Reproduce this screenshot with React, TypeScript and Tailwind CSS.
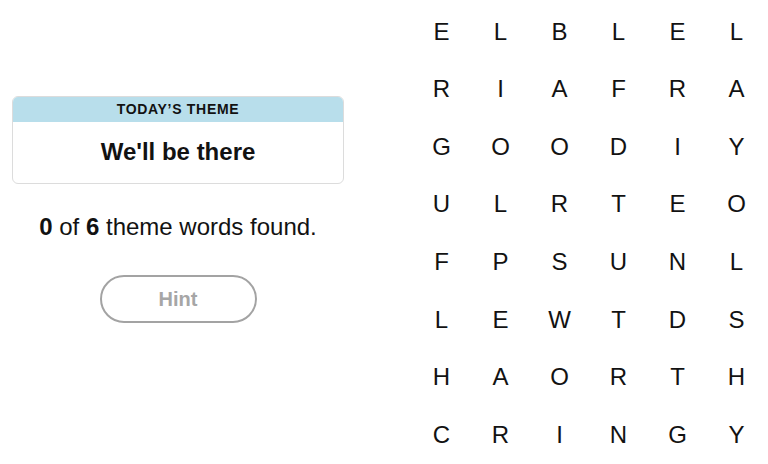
const rows = [
  "ELBLEL",
  "RIAFRA",
  "GOODIY",
  "ULRTEO",
  "FPSUNL",
  "LEWTDS",
  "HAORTH",
  "CRINGY",
];

export default function App() {
  return (
    <div
      className="flex w-[768px] h-[464px] bg-white text-[#121212] overflow-hidden"
      style={{ fontFamily: '"Liberation Sans", Arial, sans-serif' }}
    >
      {/* Left: theme + progress */}
      <div className="w-[356px] shrink-0 flex flex-col px-3 pt-[96px]">
        <div className="border border-[#dcdcdc] rounded-md overflow-hidden">
          <div className="h-[25px] bg-[#b8deeb] flex items-center justify-center text-[14px] font-bold tracking-[0.05em] uppercase">
            Today’s Theme
          </div>
          <div className="h-[61px] flex items-center justify-center text-[24px] font-bold pb-[2px]">
            We'll be there
          </div>
        </div>
        <p className="mt-[29px] text-center text-[24px] leading-[28px]">
          <span className="font-bold">0</span> of <span className="font-bold">6</span> theme words found.
        </p>
        <button className="mt-[34px] self-center w-[157px] h-[48px] rounded-full border-2 border-[#a3a3a3] text-[20px] font-bold text-[#a6a6a6]">
          Hint
        </button>
      </div>

      {/* Right: letter board */}
      <div className="ml-[56px] w-[354px] pt-[3px] grid grid-cols-6">
        {rows.map((row, r) =>
          row.split("").map((ch, c) => (
            <div
              key={`${r}-${c}`}
              className="h-[57px] flex items-center justify-center text-[24px]"
            >
              {ch}
            </div>
          ))
        )}
      </div>
    </div>
  );
}
